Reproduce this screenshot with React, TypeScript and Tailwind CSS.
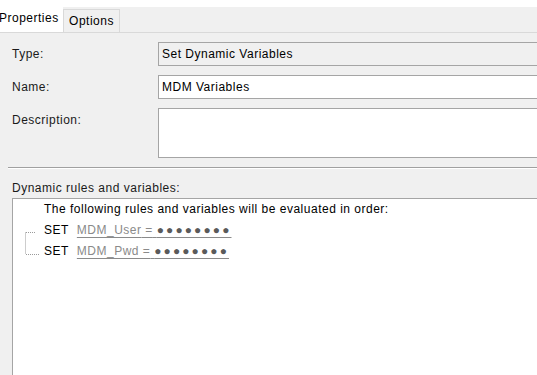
import React from "react";

const font = { fontFamily: '"Liberation Sans", Arial, sans-serif' };

const Field: React.FC<{ label: string; value?: string; readOnly?: boolean; tall?: boolean }> = ({
  label,
  value,
  readOnly,
  tall,
}) => (
  <div className={`flex ${tall ? "items-start" : "items-center"}`}>
    <div className={`w-[146px] text-[12px] text-[#1a1a1a] ${tall ? "pt-[3px]" : ""}`}>{label}</div>
    <div
      className={`flex-1 flex items-center border border-r-0 border-[#a5a5a5] pl-[3px] text-[12px] text-black ${
        tall ? "h-[50px]" : "h-[24px]"
      } ${readOnly ? "bg-[#f0f0f0]" : "bg-white"}`}
    >
      {value}
    </div>
  </div>
);

const Variable: React.FC<{ name: string }> = ({ name }) => (
  <div className="flex items-center h-[21px]">
    <span className="text-black">SET</span>
    <span className="ml-[8px] text-[#8a8a8a] underline decoration-[#8a8a8a] underline-offset-[3px]">
      {name} ={" "}
      <span className="text-[12px] tracking-[2.1px] text-[#5a5a5a]">●●●●●●●●</span>
    </span>
  </div>
);

export default function App() {
  return (
    <div
      className="w-[537px] h-[375px] overflow-hidden bg-[#f0f0f0] flex flex-col tracking-[0.5px]"
      style={font}
    >
      <div className="h-[7px] bg-white" />

      <div className="h-[26px] flex items-end border-b border-[#d9d9d9] text-[12px] text-black">
        <div className="w-[64px] h-[26px] bg-white flex items-center -ml-[1px] pb-[2px]">Properties</div>
        <div className="w-[57px] h-[23px] border border-b-0 border-[#d9d9d9] flex items-center justify-center">
          Options
        </div>
      </div>

      <div className="pl-[12px] pt-[9px] flex flex-col gap-[9px]">
        <Field label="Type:" value="Set Dynamic Variables" readOnly />
        <Field label="Name:" value="MDM Variables" />
        <Field label="Description:" tall />
      </div>

      <div className="ml-[8px] mt-[9px] border-t border-[#a0a0a0] border-b-white border-b" />

      <div className="pl-[12px] mt-[12px] text-[12px] text-[#1a1a1a] leading-[14px]">Dynamic rules and variables:</div>

      <div className="ml-[12px] mt-[3px] flex-1 bg-white border-l border-t border-[#a5a5a5] text-[12px] leading-[21px]">
        <div className="pl-[31px]">The following rules and variables will be evaluated in order:</div>
        <div className="flex">
          <svg width="31" height="42" className="shrink-0">
            <path d="M12.5 12.5 V34.5 M13 12.5 H22 M13 34.5 H26" stroke="#9a9a9a" strokeWidth="1" strokeDasharray="1 1" fill="none" />
          </svg>
          <div className="flex flex-col">
            <Variable name="MDM_User" />
            <Variable name="MDM_Pwd" />
          </div>
        </div>
      </div>
    </div>
  );
}
